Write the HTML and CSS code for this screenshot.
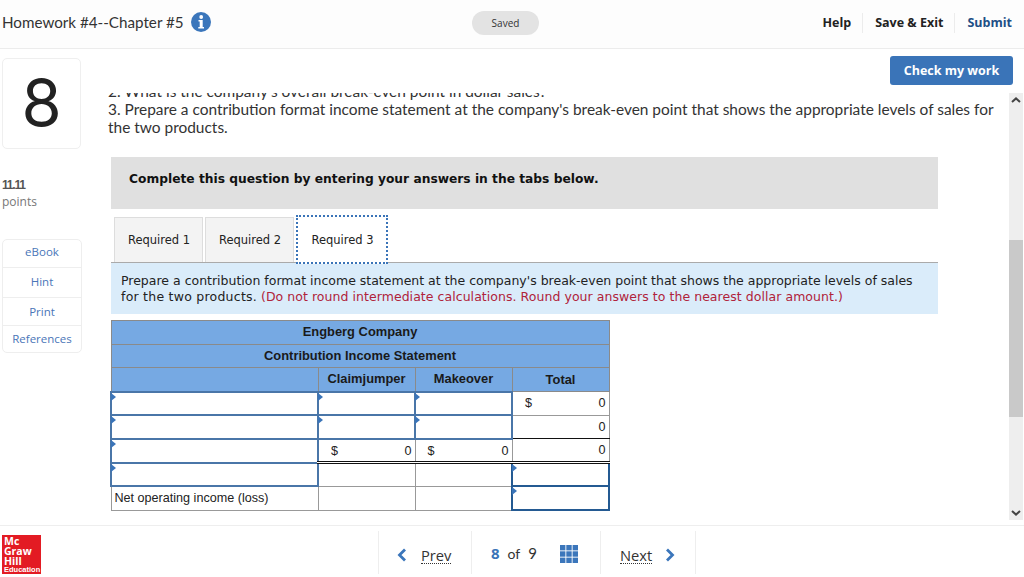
FILE: index.html
```html
<!DOCTYPE html>
<html lang="en">
<head>
<meta charset="utf-8">
<title>Homework #4--Chapter #5</title>
<link rel="stylesheet" href="styles.css">
</head>
<body>
<div class="page">
  <header class="topbar">
    <div class="title-wrap">
      <span class="title">Homework #4--Chapter #5</span>
      <svg class="info" viewBox="0 0 20 20" aria-hidden="true"><circle cx="10" cy="10" r="10" fill="#3b76bb"/><circle cx="10.2" cy="5" r="1.9" fill="#fff"/><path d="M7.5 8h4.2v7h1.3v1.6H7.3V15h1.4V9.6H7.5z" fill="#fff"/></svg>
    </div>
    <div class="saved">Saved</div>
    <nav class="actions">
      <a class="action">Help</a>
      <a class="action">Save &amp; Exit</a>
      <a class="action submit">Submit</a>
    </nav>
  </header>

  <div class="middle">
    <aside class="sidebar">
      <div class="qnum">8</div>
      <div class="score">11.11</div>
      <div class="points">points</div>
      <div class="tools">
        <a class="tool t-ebook">eBook</a>
        <a class="tool t-hint">Hint</a>
        <a class="tool t-print">Print</a>
        <a class="tool t-refs">References</a>
      </div>
    </aside>

    <main class="main">
      <div class="checkrow"><button class="check">Check my work</button></div>
      <div class="scroller">
        <div class="content">
          <div class="inner">
            <p class="question">2. What is the company's overall break-even point in dollar sales?<br>3. Prepare a contribution format income statement at the company's break-even point that shows the appropriate levels of sales for the two products.</p>
            <div class="complete">Complete this question by entering your answers in the tabs below.</div>
            <div class="tabs">
              <div class="tab">Required 1</div>
              <div class="tab">Required 2</div>
              <div class="tab active">Required 3</div>
            </div>
            <div class="prompt">Prepare a contribution format income statement at the company's break-even point that shows the appropriate levels of sales <span class="second">for the two products.</span> <span class="warn">(Do not round intermediate calculations. Round your answers to the nearest dollar amount.)</span></div>
            <table class="sheet">
              <colgroup><col class="c1"><col class="c2"><col class="c3"><col class="c4"></colgroup>
              <tr class="h"><th colspan="4">Engberg Company</th></tr>
              <tr class="h"><th colspan="4">Contribution Income Statement</th></tr>
              <tr class="h"><th></th><th>Claimjumper</th><th>Makeover</th><th>Total</th></tr>
              <tr>
                <td class="in"></td><td class="in"></td><td class="in"></td>
                <td><div class="val"><span>$</span><span>0</span></div></td>
              </tr>
              <tr>
                <td class="in"></td><td class="in"></td><td class="in"></td>
                <td class="under"><div class="val end"><span>0</span></div></td>
              </tr>
              <tr>
                <td class="in"></td>
                <td class="dbl"><div class="val"><span>$</span><span>0</span></div></td>
                <td class="dbl"><div class="val"><span>$</span><span>0</span></div></td>
                <td class="dbl"><div class="val end"><span>0</span></div></td>
              </tr>
              <tr>
                <td class="in"></td><td></td><td></td><td class="in dark"></td>
              </tr>
              <tr>
                <td class="label">Net operating income (loss)</td><td></td><td></td><td class="in dark"></td>
              </tr>
            </table>
          </div>
        </div>
        <div class="scrollbar">
          <svg class="arrow up" viewBox="0 0 10 6" aria-hidden="true"><path d="M1 5l4-3.6L9 5" fill="none" stroke="#444" stroke-width="2"/></svg>
          <div class="thumb"></div>
          <svg class="arrow down" viewBox="0 0 10 6" aria-hidden="true"><path d="M1 1l4 3.6L9 1" fill="none" stroke="#444" stroke-width="2"/></svg>
        </div>
      </div>
    </main>
  </div>

  <footer class="footer">
    <div class="logo"><span>Mc</span><span>Graw</span><span>Hill</span><span class="edu">Education</span></div>
    <div class="pager">
      <a class="pg prev">
        <svg class="chev" viewBox="0 0 10 14" aria-hidden="true"><path d="M8 1.5L2.5 7 8 12.5" fill="none" stroke="#3b76bb" stroke-width="2.8"/></svg>
        <span class="link">Prev</span>
      </a>
      <div class="pg count">
        <span class="cur">8</span><span class="of">of</span><span class="tot">9</span>
        <svg class="grid" viewBox="0 0 18 18" aria-hidden="true"><g fill="#3b76bb"><rect width="5.4" height="5.4"/><rect x="6.3" width="5.4" height="5.4"/><rect x="12.6" width="5.4" height="5.4"/><rect y="6.3" width="5.4" height="5.4"/><rect x="6.3" y="6.3" width="5.4" height="5.4"/><rect x="12.6" y="6.3" width="5.4" height="5.4"/><rect y="12.6" width="5.4" height="5.4"/><rect x="6.3" y="12.6" width="5.4" height="5.4"/><rect x="12.6" y="12.6" width="5.4" height="5.4"/></g></svg>
      </div>
      <a class="pg next">
        <span class="link">Next</span>
        <svg class="chev" viewBox="0 0 10 14" aria-hidden="true"><path d="M2 1.5L7.5 7 2 12.5" fill="none" stroke="#3b76bb" stroke-width="2.8"/></svg>
      </a>
    </div>
  </footer>
</div>
</body>
</html>
```
FILE: styles.css
```css
* { box-sizing: border-box; }
html, body { margin: 0; padding: 0; }
body { background: #fff; color: #333; font-family: "Lato", "Open Sans", sans-serif; overflow: hidden; }
.page { width: 1024px; height: 577px; display: flex; flex-direction: column; overflow: hidden; }

.topbar { height: 49px; flex: none; background: #fdfdfd; border-bottom: 1px solid #ececec; display: grid; grid-template-columns: 1fr auto 1fr; align-items: center; padding: 0 12px 1px 2px; }
.title-wrap { display: flex; align-items: center; gap: 7px; margin-top: -4px; }
.title { font-size: 15.2px; color: #333; }
.info { width: 20px; height: 20px; }
.saved { width: 67px; height: 24px; margin: -2px 0 0 -3px; border-radius: 12px; background: #e3e3e3; font: 10px/24px "Open Sans", sans-serif; text-align: center; color: #333; }
.actions { display: flex; justify-content: flex-end; align-items: center; margin-top: -2px; }
.action { font: 700 12.5px/20px "Open Sans", sans-serif; color: #222; padding: 0 11px 0 12px; border-right: 1px solid #ececec; }
.action.submit { color: #1d4f86; border-right: 0; padding: 0 0 0 12px; }

.middle { flex: 1; min-height: 0; display: flex; }
.sidebar { width: 84px; flex: none; padding: 9px 0 0 2px; }
.qnum { width: 79px; height: 91px; border: 1px solid #efefef; border-radius: 5px; display: flex; align-items: center; justify-content: center; font: 400 65px/1 "Inter", sans-serif; color: #222; padding-bottom: 2px; }
.score { margin-top: 28px; font: 700 12px/16px "Liberation Sans", sans-serif; letter-spacing: -1.2px; color: #555; }
.points { margin-top: 1px; font: 12px/16px "Open Sans", sans-serif; color: #777; }
.tools { margin-top: 29px; width: 80px; border: 1px solid #eee; border-radius: 5px; }
.tool { display: flex; align-items: center; justify-content: center; font: 11.5px/1 "Open Sans", sans-serif; color: #4a76b8; border-bottom: 1px solid #eee; }
.t-ebook { height: 28px; padding-bottom: 3px; }
.t-hint { height: 30px; padding-bottom: 2px; }
.t-print { height: 28px; }
.t-refs { height: 26px; padding-bottom: 1px; border-bottom: 0; }

.main { flex: 1; min-width: 0; display: flex; flex-direction: column; }
.checkrow { height: 44px; flex: none; display: flex; justify-content: flex-end; padding: 7px 11px 0 0; }
.check { width: 123px; height: 29px; border: 0; border-radius: 3px; background: #3a74b8; color: #fff; font: 700 12.5px/29px "Open Sans", sans-serif; padding: 0; }
.scroller { height: 427px; flex: none; display: flex; padding-right: 1px; }
.content { flex: 1; min-width: 0; overflow: hidden; padding-left: 24px; }
.inner { margin-top: -11px; }
.question { margin: 0 10px 21px 0; font: 15.45px/18px "Lato", sans-serif; color: #333; }
.complete { margin-left: 3px; width: 827px; height: 52px; background: #e0e0e0; padding: 14px 18px 0; font: 700 12.25px/16px "DejaVu Sans", sans-serif; color: #111; }
.tabs { margin: 8px 0 0 3px; width: 827px; height: 46px; border-bottom: 1px solid #aaa; display: flex; padding-left: 3px; gap: 2px; }
.tab { width: 89px; height: 45px; background: #f3f3f3; border: 1px solid #ddd; border-bottom: 0; padding-left: 1px; font: 11.5px/45px "DejaVu Sans", sans-serif; text-align: center; color: #222; }
.tab.active { width: 92px; height: 49px; margin: -2px 0 0; background: #fff; outline: 2px dotted #3a74b8; outline-offset: -2px; border: 0; line-height: 50px; position: relative; z-index: 1; }
.prompt { margin-left: 3px; width: 827px; height: 51px; background: #daecfa; padding: 10px 10px 0; font: 12.5px/16.4px "DejaVu Sans", sans-serif; color: #222; }
.second { letter-spacing: .24px; }
.warn { color: #b0233b; letter-spacing: .05px; }

.sheet { margin: 6px 0 0 2px; border-collapse: collapse; table-layout: fixed; width: 498px; border: 1px solid #8a8a8a; font: 12.6px "Liberation Sans", sans-serif; color: #222; }
.c1 { width: 207px; } .c2, .c3, .c4 { width: 97px; }
.sheet tr { height: 23.7px; }
.sheet th { background: #76a9e3; border: 1px solid #8a8a8a; font: 700 12.9px "Liberation Sans", sans-serif; padding: 0 0 1px; color: #1a1a1a; text-align: center; }
.sheet td { border: 1px solid #999; padding: 0; position: relative; }
.sheet td.in { background: #fff; border: 2px solid #4a76a8; }
.sheet td.in::before { content: ""; position: absolute; left: -1px; top: 0; border-style: solid; border-width: 4px 0 4px 5px; border-color: transparent transparent transparent #3a74b8; }
.sheet td.in.dark { border-color: #245a92; }
.sheet td.under { border-bottom: 1px solid #111; }
.sheet td.dbl { border-top: 1px solid #111; border-bottom: 3px double #111; }
.sheet td.label { padding-left: 3px; }
.val { display: flex; justify-content: space-between; padding: 0 3px 0 12px; }
.val.end { justify-content: flex-end; }

.scrollbar { width: 14px; flex: none; background: #eee; position: relative; height: 427px; padding-top: 147px; }
.thumb { height: 177px; background: #c9c9c9; }
.arrow { position: absolute; left: 2px; width: 10px; height: 6px; }
.arrow.up { top: 4px; }
.arrow.down { bottom: 4px; }

.footer { height: 52px; flex: none; border-top: 1px solid #eee; display: flex; background: #fff; padding-left: 2px; position: relative; }
.logo { width: 39px; height: 39px; margin-top: 9px; background: #e31b23; color: #fff; display: flex; flex-direction: column; padding: 1px 0 0 2px; font: 700 10.5px/10px "Open Sans", sans-serif; }
.logo .edu { font: 700 7.5px/8px "Liberation Sans", sans-serif; }
.pager { margin: 5px 0 3px 337px; display: flex; height: 43px; border-left: 1px solid #eee; }
.pg { display: flex; align-items: center; border-right: 1px solid #eee; padding-top: 5px; }
.prev { width: 93px; padding-left: 18px; gap: 14px; }
.count { width: 129px; padding: 1px 0 0 19px; }
.next { width: 95px; padding-left: 19px; gap: 13px; }
.chev { width: 10px; height: 14px; }
.link { font: 14.7px/16px "Open Sans", sans-serif; color: #333; border-bottom: 1px dotted #333; }
.cur { font: 700 15px "Open Sans", sans-serif; color: #3a74b8; }
.of { font-size: 14px; margin: 0 8px; }
.tot { font-size: 15px; }
.grid { width: 18px; height: 18px; margin: 1px 0 0 23px; }
```
